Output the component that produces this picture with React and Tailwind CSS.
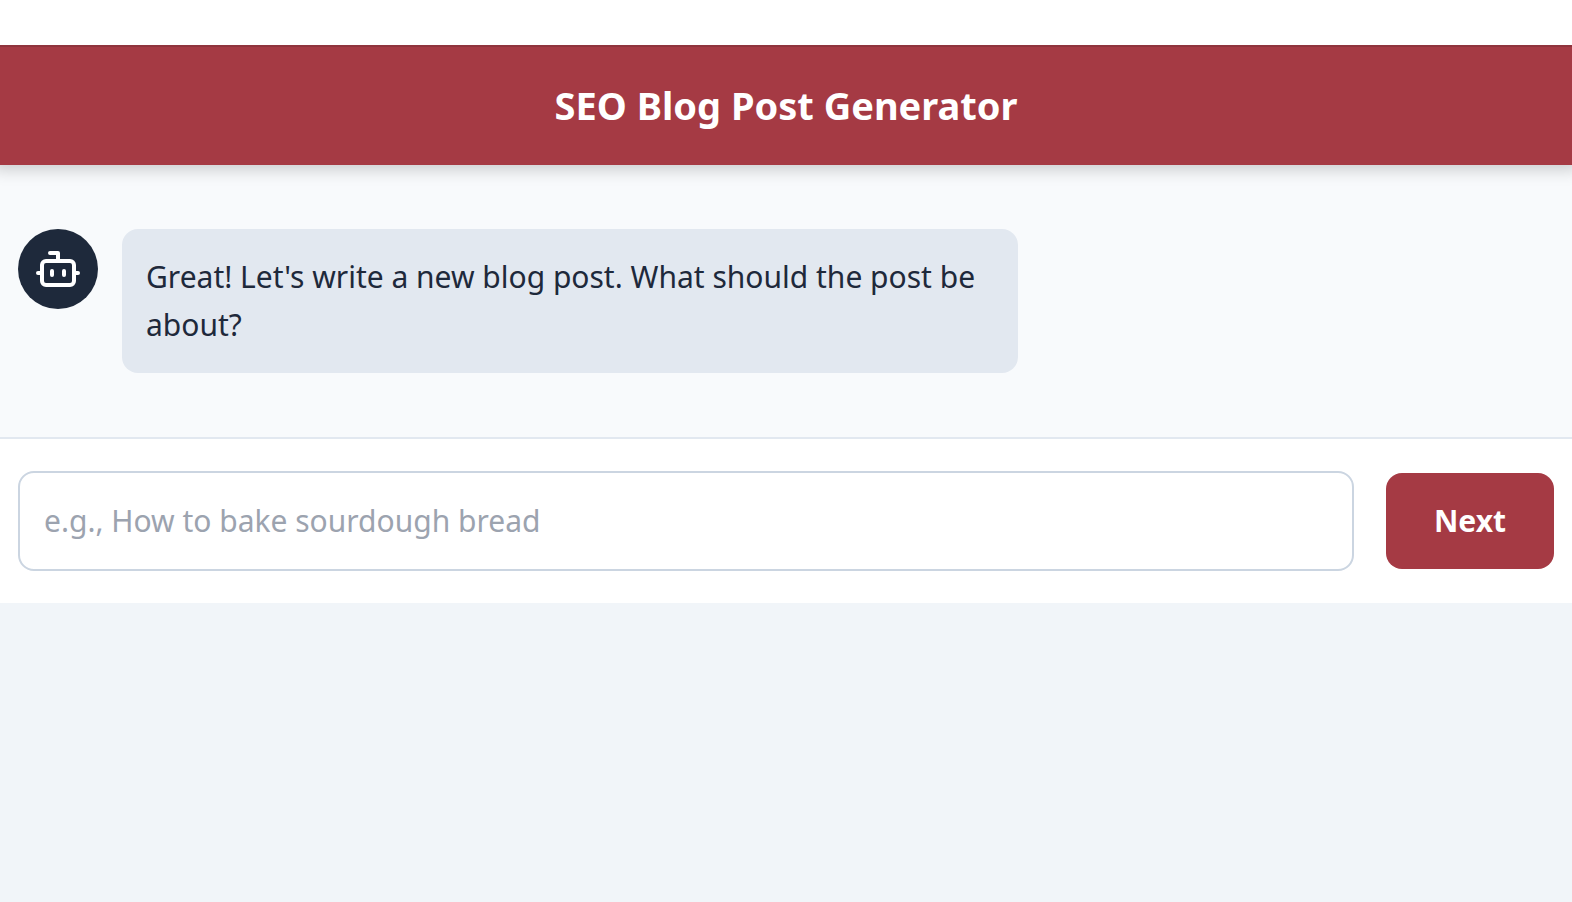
import { useState } from 'react';
import { Bot } from 'lucide-react';

const BotMessage = ({ children }) => (
  <div className="flex items-start gap-6">
    <div className="flex size-20 shrink-0 items-center justify-center rounded-full bg-[#1e293b] text-white">
      <Bot size={48} />
    </div>
    <div className="max-w-7/12 rounded-2xl bg-[#e2e8f0] p-6 text-[#1e293b]">
      <p>{children}</p>
    </div>
  </div>
);

export default function App() {
  const [topic, setTopic] = useState('');

  return (
    <div className="min-h-screen bg-[#f1f5f9] font-['Noto_Sans',sans-serif] text-[30px] leading-12">
      <div className="relative z-10 h-[45px] bg-white"></div>
      <header className="relative border-t-2 border-[#8f343d] bg-[#a53a44] pt-[30px] pb-8 text-center text-white shadow-[0_-4px_16px_8px_rgba(0,0,0,0.2)]">
        <h1 className="text-[38px] leading-14 font-bold">SEO Blog Post Generator</h1>
      </header>

      <main className="border-b-2 border-[#e2e8f0] bg-[#f8fafc] px-[18px] py-16">
        <BotMessage>Great! Let's write a new blog post. What should the post be about?</BotMessage>
      </main>

      <form className="flex items-center gap-8 bg-white px-[18px] py-8" onSubmit={(e) => e.preventDefault()}>
        <input
          type="text"
          aria-label="Blog post topic"
          value={topic}
          onChange={(e) => setTopic(e.target.value)}
          placeholder="e.g., How to bake sourdough bread"
          className="min-w-0 flex-1 rounded-2xl border-2 border-[#cbd5e1] bg-white px-6 py-6 placeholder:text-[#9ca3af]"
        />
        <button type="submit" className="rounded-2xl bg-[#a53a44] px-12 py-6 font-bold text-white">
          Next
        </button>
      </form>
    </div>
  );
}
